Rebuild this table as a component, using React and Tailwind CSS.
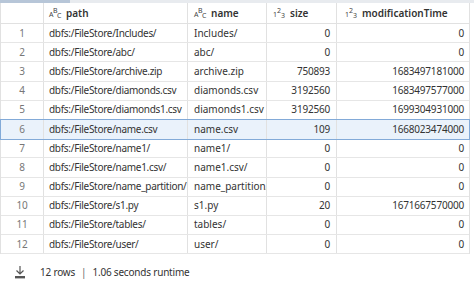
import React from 'react';

const rows = [
  ['dbfs:/FileStore/Includes/', 'Includes/', '0', '0'],
  ['dbfs:/FileStore/abc/', 'abc/', '0', '0'],
  ['dbfs:/FileStore/archive.zip', 'archive.zip', '750893', '1683497181000'],
  ['dbfs:/FileStore/diamonds.csv', 'diamonds.csv', '3192560', '1683497577000'],
  ['dbfs:/FileStore/diamonds1.csv', 'diamonds1.csv', '3192560', '1699304931000'],
  ['dbfs:/FileStore/name.csv', 'name.csv', '109', '1668023474000'],
  ['dbfs:/FileStore/name1/', 'name1/', '0', '0'],
  ['dbfs:/FileStore/name1.csv/', 'name1.csv/', '0', '0'],
  ['dbfs:/FileStore/name_partition/', 'name_partition/', '0', '0'],
  ['dbfs:/FileStore/s1.py', 's1.py', '20', '1671667570000'],
  ['dbfs:/FileStore/tables/', 'tables/', '0', '0'],
  ['dbfs:/FileStore/user/', 'user/', '0', '0'],
];

const cols = 'grid grid-cols-[43px_144px_79px_70px_134px]';

// little type badges in the header
const StrIcon = () => (
  <span className="relative inline-block w-[13px] h-[12px] mr-[4px] text-[7px] leading-none font-normal tracking-normal text-[#444]">
    <span className="absolute left-0 top-[4px]">A</span>
    <span className="absolute left-[4px] top-0">B</span>
    <span className="absolute left-[8px] top-[5px]">C</span>
  </span>
);

const NumIcon = () => (
  <span className="relative inline-block w-[13px] h-[12px] mr-[4px] text-[7px] leading-none font-normal tracking-normal text-[#444]">
    <span className="absolute left-0 top-[4px]">1</span>
    <span className="absolute left-[4px] top-0">2</span>
    <span className="absolute left-[8px] top-[5px]">3</span>
  </span>
);

const App = () => {
  return (
    <div className="w-[474px] h-[284px] bg-white overflow-hidden text-[10px] text-[#333] font-['Noto_Sans','Open_Sans',sans-serif]">
      {/* top strip */}
      <div className="flex h-[3px] bg-[#e8ebef]">
        <div className="w-[70px] bg-[#b7c6d8]" />
      </div>

      <div className="w-[470px] border-l border-r border-[#e1e1e1]">
        {/* header */}
        <div className={`${cols} h-[21px] border-b border-[#e1e1e1] font-semibold`}>
          <div className="border-r border-[#e1e1e1]" />
          <div className="flex items-center pl-[5px] border-r border-[#e1e1e1]"><StrIcon />path</div>
          <div className="flex items-center pl-[6px] border-r border-[#e1e1e1]"><StrIcon />name</div>
          <div className="flex items-center pl-[6px] border-r border-[#e1e1e1]"><NumIcon />size</div>
          <div className="flex items-center pl-[8px]"><NumIcon />modificationTime</div>
        </div>

        {rows.map((r, i) => {
          const sel = i === 5;
          return (
            <div
              key={i}
              className={`${cols} h-[19.2px] tracking-[-0.2px] ${sel ? 'bg-[#eaf2fb] outline outline-1 outline-[#82aad8] relative' : 'border-b border-[#e6e6e6]'}`}
            >
              <div className="flex items-center justify-center text-[#777] border-r border-[#e1e1e1]">{i + 1}</div>
              <div className="flex items-center pl-[5px] tracking-[-0.3px] whitespace-nowrap overflow-hidden border-r border-[#e1e1e1]">{r[0]}</div>
              <div className="flex items-center pl-[6px] tracking-normal whitespace-nowrap overflow-hidden border-r border-[#e1e1e1]">{r[1]}</div>
              <div className="flex items-center justify-end pr-[6px] border-r border-[#e1e1e1]">{r[2]}</div>
              <div className="flex items-center justify-end pr-[7px]">{r[3]}</div>
            </div>
          );
        })}
      </div>

      {/* footer */}
      <div className="flex items-center h-[36px] pl-[14px] tracking-[-0.2px] text-[#333]">
        <svg width="12" height="14" viewBox="0 0 12 14" className="mr-[14px]">
          <path d="M6 1v8M2.5 5.5L6 9l3.5-3.5" stroke="#555" strokeWidth="1.2" fill="none" />
          <rect x="1" y="11" width="10" height="2.4" fill="#555" />
        </svg>
        <span>12 rows</span>
        <span className="mx-[6px] text-[#666]">|</span>
        <span>1.06 seconds runtime</span>
      </div>
    </div>
  );
};

export default App;
